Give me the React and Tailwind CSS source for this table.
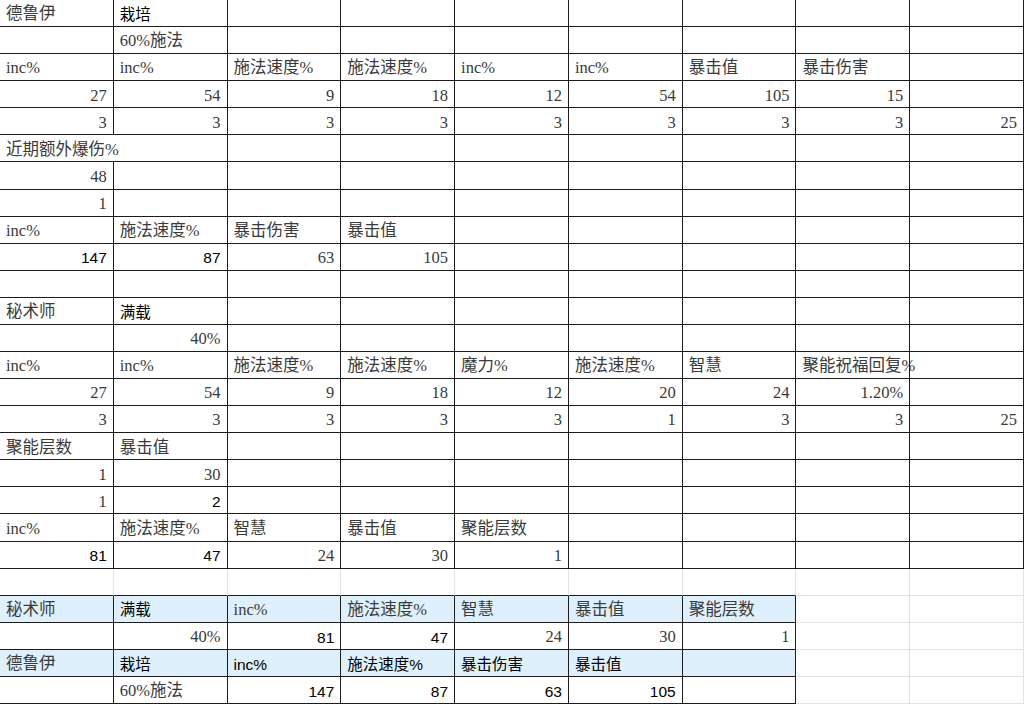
import React from "react";

// s: prefix marks a cell drawn in the sans font (bold-ish Arial look)
const rows = [
  ["德鲁伊", "s:栽培", "", "", "", "", "", "", ""],
  ["", "60%施法", "", "", "", "", "", "", ""],
  ["inc%", "inc%", "施法速度%", "施法速度%", "inc%", "inc%", "暴击值", "暴击伤害", ""],
  ["27", "54", "9", "18", "12", "54", "105", "15", ""],
  ["3", "3", "3", "3", "3", "3", "3", "3", "25"],
  ["span:近期额外爆伤%", "", "", "", "", "", "", ""],
  ["48", "", "", "", "", "", "", "", ""],
  ["1", "", "", "", "", "", "", "", ""],
  ["inc%", "施法速度%", "暴击伤害", "暴击值", "", "", "", "", ""],
  ["s:147", "s:87", "63", "105", "", "", "", "", ""],
  ["", "", "", "", "", "", "", "", ""],
  ["秘术师", "s:满载", "", "", "", "", "", "", ""],
  ["", "40%", "", "", "", "", "", "", ""],
  ["inc%", "inc%", "施法速度%", "施法速度%", "魔力%", "施法速度%", "智慧", "聚能祝福回复%", ""],
  ["27", "54", "9", "18", "12", "20", "24", "1.20%", ""],
  ["3", "3", "3", "3", "3", "1", "3", "3", "25"],
  ["聚能层数", "暴击值", "", "", "", "", "", "", ""],
  ["1", "30", "", "", "", "", "", "", ""],
  ["1", "s:2", "", "", "", "", "", "", ""],
  ["inc%", "施法速度%", "智慧", "暴击值", "聚能层数", "", "", "", ""],
  ["s:81", "s:47", "24", "30", "1", "", "", "", ""],
];

const summary = [
  { blue: true, cells: ["秘术师", "s:满载", "inc%", "施法速度%", "智慧", "暴击值", "聚能层数"] },
  { blue: false, cells: ["", "40%", "s:81", "s:47", "24", "30", "1"] },
  { blue: true, cells: ["德鲁伊", "s:栽培", "s:inc%", "s:施法速度%", "s:暴击伤害", "s:暴击值", ""] },
  { blue: false, cells: ["", "60%施法", "s:147", "s:87", "s:63", "s:105", ""] },
];

const serif = "font-['Liberation_Serif','Noto_Sans_CJK_SC',serif] text-[16.5px] text-[#3a3a3a]";
const sans = "font-['Liberation_Sans','Noto_Sans_CJK_SC',sans-serif] text-[15.5px] text-black";

function Cell({ raw, span, extra = "" }) {
  let text = raw;
  let isSans = false;
  if (text.startsWith("s:")) {
    isSans = true;
    text = text.slice(2);
  }
  const numeric = /^[\d.]+%?$/.test(text);
  return (
    <div
      className={`flex items-center px-[6px] pt-[3px] whitespace-nowrap overflow-visible leading-none ${
        numeric ? "justify-end" : "justify-start"
      } ${isSans ? sans : serif} ${span ? "col-span-2" : ""} ${extra}`}
    >
      {text}
    </div>
  );
}

export default function App() {
  return (
    <div className="w-[1024px] h-[704px] bg-white overflow-hidden grid grid-cols-9 grid-rows-[repeat(26,1fr)]">
      {rows.map((row, r) =>
        row.map((c, i) => {
          const span = c.startsWith("span:");
          return (
            <Cell
              key={`${r}-${i}`}
              raw={span ? c.slice(5) : c}
              span={span}
              extra="border-r border-b border-[#1c1c1c]"
            />
          );
        })
      )}

      {Array.from({ length: 9 }).map((_, i) => (
        <div
          key={`gap-${i}`}
          className={`border-r border-[#e2e2e2] border-b ${i < 7 ? "border-b-[#1c1c1c]" : ""}`}
        />
      ))}

      {summary.map((row, r) => (
        <React.Fragment key={`sum-${r}`}>
          {row.cells.map((c, i) => (
            <Cell
              key={`s-${r}-${i}`}
              raw={c}
              extra={`border-r border-b border-[#1c1c1c] ${row.blue ? "bg-[#def0fb]" : ""}`}
            />
          ))}
          <div className="border-r border-b border-[#e2e2e2]" />
          <div className="border-r border-b border-[#e2e2e2]" />
        </React.Fragment>
      ))}
    </div>
  );
}
